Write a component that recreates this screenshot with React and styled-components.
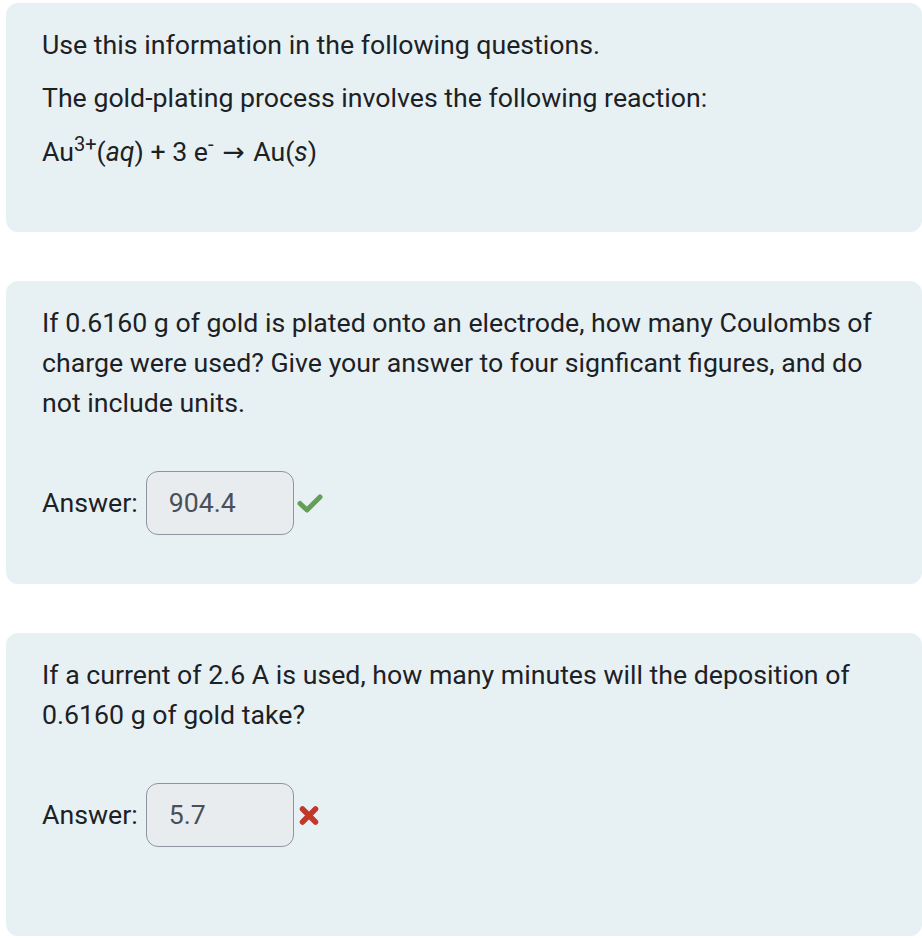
import React from 'react';
import styled, { createGlobalStyle } from 'styled-components';

const GlobalStyle = createGlobalStyle`
  html, body {
    margin: 0;
    padding: 0;
    background: #ffffff;
  }
  body {
    font-family: Roboto, "Liberation Sans", sans-serif;
    color: #1d2125;
  }
`;

const Page = styled.div`
  display: flex;
  flex-direction: column;
  gap: 49px;
  padding: 3px 0 0 6px;
`;

const Card = styled.div`
  background: #e7f1f4;
  border-radius: 12px;
  padding: 22px 36px ${(p) => p.$bottom}px;
`;

const Para = styled.p`
  margin: 0 0 13px;
  font-size: 26.7px;
  line-height: 40px;
  color: #1d2125;

  &:last-child {
    margin-bottom: 0;
  }
`;

const Sup = styled.sup`
  font-size: 0.75em;
  line-height: 0;
  vertical-align: 0.5em;
`;

const Arrow = styled.span`
  font-family: "Noto Sans", "DejaVu Sans", sans-serif;
  margin: 0 2px;
`;

const AnswerRow = styled.div`
  display: flex;
  align-items: center;
  margin-top: 48px;
`;

const Label = styled.label`
  font-size: 26.7px;
  line-height: 40px;
  margin-right: 8px;
`;

const AnswerBox = styled.div`
  box-sizing: border-box;
  width: 148px;
  height: 64px;
  padding: 0 22px;
  display: flex;
  align-items: center;
  background: #e9ecef;
  border: 1px solid #8f959e;
  border-radius: 12px;
  font-size: 26.7px;
  color: #495057;
`;

const Mark = styled.span`
  display: inline-flex;
  margin-left: ${(p) => p.$offset}px;
`;

const CheckIcon = () => (
  <svg width="26" height="20" viewBox="0 0 26 20">
    <path
      d="M3 10.5 L10 17 L23 4"
      fill="none"
      stroke="#63a055"
      strokeWidth="5"
      strokeLinecap="round"
      strokeLinejoin="round"
    />
  </svg>
);

const CrossIcon = () => (
  <svg width="20" height="21" viewBox="0 0 20 21">
    <path
      d="M3.5 4 L16.5 17 M16.5 4 L3.5 17"
      fill="none"
      stroke="#c0392b"
      strokeWidth="5.5"
      strokeLinecap="round"
    />
  </svg>
);

const App = () => (
  <>
    <GlobalStyle />
    <Page>
      <Card $bottom={60}>
        <Para>Use this information in the following questions.</Para>
        <Para>The gold-plating process involves the following reaction:</Para>
        <Para>
          Au<Sup>3+</Sup>(<i>aq</i>) + 3 e<Sup>-</Sup> <Arrow>→</Arrow> Au(<i>s</i>)
        </Para>
      </Card>

      <Card $bottom={49}>
        <Para>
          If 0.6160 g of gold is plated onto an electrode, how many Coulombs of
          charge were used? Give your answer to four signficant figures, and do
          not include units.
        </Para>
        <AnswerRow>
          <Label>Answer:</Label>
          <AnswerBox>904.4</AnswerBox>
          <Mark $offset={3}>
            <CheckIcon />
          </Mark>
        </AnswerRow>
      </Card>

      <Card $bottom={89}>
        <Para>
          If a current of 2.6 A is used, how many minutes will the deposition
          of 0.6160 g of gold take?
        </Para>
        <AnswerRow>
          <Label>Answer:</Label>
          <AnswerBox>5.7</AnswerBox>
          <Mark $offset={5}>
            <CrossIcon />
          </Mark>
        </AnswerRow>
      </Card>
    </Page>
  </>
);

export default App;
